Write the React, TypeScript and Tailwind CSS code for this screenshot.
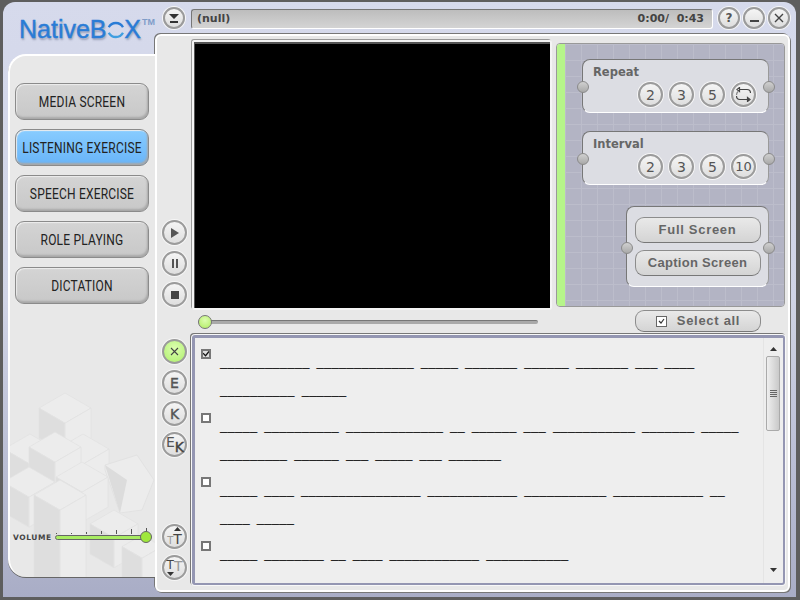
import React from "react";

const menu = ["MEDIA SCREEN", "LISTENING EXERCISE", "SPEECH EXERCISE", "ROLE PLAYING", "DICTATION"];

// word lengths of the blanked out captions
const captions = [
  [[12, 13, 5, 7, 6, 7, 3, 4], [10, 6]],
  [[5, 10, 13, 2, 6, 3, 11, 7, 5], [9, 6, 3, 5, 3, 7]],
  [[5, 4, 16, 12, 11, 12, 2], [4, 5]],
  [[5, 8, 2, 4, 12, 11]],
];

function Round({ children, green, small }: { children?: React.ReactNode; green?: boolean; small?: boolean }) {
  return (
    <div
      className={
        "flex shrink-0 items-center justify-center rounded-full border-2 border-[#9b9b9b] font-['DejaVu_Sans',sans-serif] text-[14px] leading-none text-[#555] shadow-[0_0_0_1px_#f6f6f6] " +
        (small ? "h-[22px] w-[22px] " : "h-[25px] w-[25px] ") +
        (green
          ? "bg-[radial-gradient(circle_at_50%_35%,#dcfdb0,#aef06c)]"
          : "bg-gradient-to-b from-[#f5f5f5] to-[#dedede]")
      }
    >
      {children}
    </div>
  );
}

function Pip({ side }: { side: "left" | "right" }) {
  return (
    <div
      className={
        "absolute top-1/2 mt-[1px] h-[12px] w-[12px] -translate-y-1/2 rounded-full border border-[#8a8a8a] bg-gradient-to-b from-[#d0d0d0] to-[#a9a9a9] " +
        (side === "left" ? "left-[-6px]" : "right-[-7px]")
      }
    />
  );
}

function Card({ label, children }: { label: string; children: React.ReactNode }) {
  return (
    <div className="relative h-[54px] w-[187px] rounded-[8px] border border-[#777] border-b-white border-r-[#9a9a9a] bg-[#dcdde3] pl-[10px] pr-[12px] pt-[4px]">
      <div className="text-[11.500px] font-bold leading-[16px] text-[#666]">{label}</div>
      <div className="mt-[2px] flex justify-end gap-[6px]">{children}</div>
      <Pip side="left" />
      <Pip side="right" />
    </div>
  );
}

function Pill({ children, className }: { children: React.ReactNode; className?: string }) {
  return (
    <div
      className={
        "flex w-[126px] shrink-0 items-center justify-center rounded-[9px] border border-[#8c8c8c] border-b-[#777] bg-gradient-to-b from-[#e9e9e9] to-[#d4d4d4] font-['Liberation_Sans',sans-serif] text-[13px] font-bold text-[#666] " +
        (className || "")
      }
    >
      {children}
    </div>
  );
}

function RepeatIcon() {
  return (
    <svg width="17" height="15" viewBox="0 0 17 15" fill="none" stroke="#444" strokeWidth="1.2">
      <path d="M4 2.500h8c2.500 0 3.500 1.500 3.500 3.500" />
      <path d="M1.500 8c0-1 .5-2.500 1.500-3.500" stroke="#888" />
      <path d="M4.500 .5 2 2.500l2.500 2z" fill="#fff" />
      <path d="M13 12.500H5C2.500 12.500 1.500 11 1.500 9" />
      <path d="M12.500 10.500l2.500 2-2.500 2z" fill="#444" />
    </svg>
  );
}

function Tri({ down, className }: { down?: boolean; className?: string }) {
  return (
    <svg width="7" height="4" viewBox="0 0 7 4" className={className}>
      <path d={down ? "M0 0h7L3.500 4z" : "M0 4h7L3.500 0z"} fill="#333" />
    </svg>
  );
}

function Cube({ x, y, s = 26, h = 30 }: { x: number; y: number; s?: number; h?: number }) {
  const t = s * 0.58;
  return (
    <g stroke="#e2e2e2" strokeWidth="0.8">
      <polygon points={`${x},${y} ${x + s},${y + t} ${x},${y + 2 * t} ${x - s},${y + t}`} fill="#ececec" />
      <polygon points={`${x - s},${y + t} ${x},${y + 2 * t} ${x},${y + 2 * t + h} ${x - s},${y + t + h}`} fill="#dedede" />
      <polygon points={`${x + s},${y + t} ${x},${y + 2 * t} ${x},${y + 2 * t + h} ${x + s},${y + t + h}`} fill="#ececec" />
    </g>
  );
}

function Cubes() {
  return (
    <svg className="absolute bottom-0 left-0" width="145" height="197" viewBox="8 380 145 197">
      <Cube x={63} y={393} />
      <Cube x={28} y={434} />
      <Cube x={81} y={434} />
      <polygon points="103,465 135,455 152,480 140,510 118,513 103,470" fill="#ececec" stroke="#e2e2e2" />
      <polygon points="103,465 118,513 125,480" fill="#dcdcdc" />
      <Cube x={53} y={432} />
      <Cube x={27} y={467} />
      <Cube x={80} y={462} />
      <Cube x={58} y={480} s={26} h={90} />
      <Cube x={112} y={510} s={24} h={30} />
      <Cube x={140} y={535} s={20} h={40} />
    </svg>
  );
}

export default function App() {
  return (
    <div className="h-[600px] w-[800px] overflow-hidden bg-[#5e5e5e] pl-[3px] pt-[2px] font-['DejaVu_Sans',sans-serif]">
      <div className="flex h-[595px] w-[793px] rounded-t-[12px] bg-gradient-to-b from-[#d6daec] via-[#d0d4e6] to-[#a9adc6]">
        {/* left column */}
        <div className="flex w-[152px] shrink-0 flex-col">
          <div className="flex h-[52px] items-start pl-[16px] pt-[12px] font-['Liberation_Sans',sans-serif] text-[25px] leading-[30px] text-[#2a7cd6] [-webkit-text-stroke:0.4px_#2a7cd6] [text-shadow:1px_2px_2px_#9aa0b8]">
            NativeB
            <svg width="20" height="20" viewBox="0 0 20 20" className="mt-[6px]" fill="none" strokeWidth="2.600">
              <path d="M2 7A9 9 0 0 1 18 7" stroke="#2a7cd6" />
              <path d="M2 13A9 9 0 0 0 18 13" stroke="#3f9ee0" />
            </svg>
            X
            <span className="ml-[1px] mt-[-7px] text-[9px] font-bold text-[#7f9cc8] [-webkit-text-stroke:0] [text-shadow:none]">TM</span>
          </div>
          <div className="relative ml-[5px] flex h-[523px] w-[147px] flex-col overflow-hidden rounded-l-[18px] border-l-2 border-t-2 border-white bg-[#e8e8e8] pl-[5px] pt-[27px] shadow-[0_1px_0_#666]">
            <Cubes />
            <div className="relative flex flex-col gap-[9px]">
              {menu.map((m, i) => (
                <div
                  key={m}
                  className={
                    "flex h-[37px] w-[134px] items-center justify-center rounded-[9px] border border-[#8b8b8b] font-['Roboto',sans-serif] text-[12px] tracking-[0.2px] text-[#222] shadow-[inset_-1px_-2px_2px_#a8a8a8,inset_1px_1px_1px_#eee] " +
                    (i === 1 ? "bg-gradient-to-b from-[#88ccff] to-[#68b4f8]" : "bg-gradient-to-b from-[#d4d4d4] to-[#c8c8c8]")
                  }
                >
                  <span className="scale-y-115">{m}</span>
                </div>
              ))}
            </div>
            <div className="relative mb-[34px] ml-[-2px] mt-auto flex items-center">
              <span className="w-[42px] text-[7.500px] font-bold tracking-[0.6px] text-[#444]">VOLUME</span>
              <div className="relative h-[5px] w-[92px] rounded-l-full border border-[#666] bg-[#a8ec62]">
                <div className="absolute bottom-[5px] left-0 flex w-[92px] items-end justify-between pr-[1px]">
                  <i className="h-[1px] w-[1px] bg-[#555]" />
                  <i className="h-[1px] w-[1px] bg-[#555]" />
                  <i className="h-[2px] w-[1px] bg-[#555]" />
                  <i className="h-[3px] w-[1px] bg-[#555]" />
                  <i className="h-[4px] w-[1px] bg-[#555]" />
                  <i className="h-[5px] w-[1px] bg-[#555]" />
                  <i className="h-[6px] w-[1px] bg-[#555]" />
                </div>
                <div className="absolute right-[-6px] top-[-5px] h-[12px] w-[12px] rounded-full border border-[#666] bg-[#9fe83c]" />
              </div>
            </div>
          </div>
        </div>

        {/* right column */}
        <div className="flex w-[635px] shrink-0 flex-col">
          <div className="flex h-[32px] items-start pl-[8px] pt-[5px]">
            <Round small>
              <svg width="10" height="9" viewBox="0 0 10 9">
                <path d="M0 0h10L5 5z M1 7h8v2H1z" fill="#333" />
              </svg>
            </Round>
            <div className="ml-[6px] mt-[2px] flex h-[20px] w-[522px] shrink-0 items-center justify-between rounded-[3px] border border-[#777] border-b-white border-r-white bg-gradient-to-b from-[#bdbdbd] to-[#d4d4d4] pl-[5px] pr-[8px] text-[11px] font-bold text-[#444]">
              <span>(null)</span>
              <span className="whitespace-pre">0:00/  0:43</span>
            </div>
            <div className="ml-[5px] flex gap-[3px]">
              <Round small><span className="text-[12px] font-bold">?</span></Round>
              <Round small><span className="mt-[6px] h-[2px] w-[9px] bg-[#444]" /></Round>
              <Round small>
                <svg width="10" height="10" viewBox="0 0 10 10" stroke="#444" strokeWidth="1.400"><path d="M1 1l8 8M9 1l-8 8" /></svg>
              </Round>
            </div>
          </div>

          <div className="flex h-[558px] w-[635px] rounded-[6px] border-2 border-white bg-[#e8e8e8] shadow-[-1px_-1px_0_#777,1px_1px_0_#777]">
            {/* side buttons */}
            <div className="flex w-[35px] shrink-0 flex-col pl-[5px] pt-[184px]">
              <div className="flex flex-col gap-[6px]">
                <Round>
                  <svg width="9" height="10" viewBox="0 0 9 10"><path d="M1 0l8 5-8 5z" fill="#555" /></svg>
                </Round>
                <Round><span className="flex gap-[2px]"><i className="h-[9px] w-[2px] bg-[#555]" /><i className="h-[9px] w-[2px] bg-[#555]" /></span></Round>
                <Round><span className="h-[8px] w-[8px] bg-[#444]" /></Round>
              </div>
              <div className="mt-[32px] flex flex-col gap-[6px]">
                <Round green>
                  <svg width="9" height="9" viewBox="0 0 9 9" stroke="#444" strokeWidth="1.100"><path d="M1 1l7 7M8 1l-7 7" /></svg>
                </Round>
                <Round><span className="[-webkit-text-stroke:0.4px_#555]">E</span></Round>
                <Round><span className="[-webkit-text-stroke:0.4px_#555]">K</span></Round>
                <Round>
                  <span className="flex h-[19px] w-[17px] justify-between text-[14px]">
                    <span className="self-start">E</span>
                    <span className="self-end text-[#444] [-webkit-text-stroke:0.4px_#444]">K</span>
                  </span>
                </Round>
              </div>
              <div className="mt-[67px] flex flex-col gap-[6px]">
                <Round>
                  <span className="flex items-end">
                    <span className="text-[10px] text-[#999]">T</span>
                    <span className="flex flex-col items-center text-[14px] text-[#444]">
                      <Tri className="mb-[1px]" />
                      T
                    </span>
                  </span>
                </Round>
                <Round>
                  <span className="flex items-start">
                    <span className="flex flex-col items-center text-[12px] text-[#444]">
                      T
                      <Tri down className="mt-[1px]" />
                    </span>
                    <span className="text-[14px] text-[#999]">T</span>
                  </span>
                </Round>
              </div>
            </div>

            {/* content */}
            <div className="flex w-[593px] shrink-0 flex-col pt-[4px]">
              <div className="flex h-[270px]">
                <div className="h-[270px] w-[360px] rounded-[3px] border-2 border-[#f4f4f4] shadow-[-1px_-1px_0_#999]">
                  <div className="h-full w-full border-l border-t-2 border-[#555] bg-black" />
                </div>
                <div className="ml-[4px] mt-[3px] flex h-[264px] w-[229px] overflow-hidden rounded-[4px] border border-[#999]">
                  <div className="w-[8px] shrink-0 bg-[#b6f58a]" />
                  <div className="flex-1 bg-[#b3b4c4] bg-[linear-gradient(#bcbdcb_1px,transparent_1px),linear-gradient(90deg,#bcbdcb_1px,transparent_1px)] bg-[length:16px_16px] pl-[17px] pt-[15px]">
                    <div className="flex flex-col gap-[18px]">
                      <Card label="Repeat">
                        <Round>2</Round>
                        <Round>3</Round>
                        <Round>5</Round>
                        <Round><RepeatIcon /></Round>
                      </Card>
                      <Card label="Interval">
                        <Round>2</Round>
                        <Round>3</Round>
                        <Round>5</Round>
                        <Round><span className="text-[13px]">10</span></Round>
                      </Card>
                    </div>
                    <div className="relative ml-[44px] mt-[21px] flex h-[81px] w-[143px] flex-col items-center justify-center gap-[7px] rounded-[8px] border border-[#777] border-b-white border-r-[#9a9a9a] bg-[#dcdde3]">
                      <Pill className="h-[26px] tracking-[0.7px]">Full Screen</Pill>
                      <Pill className="h-[26px] tracking-[0.3px]">Caption Screen</Pill>
                      <Pip side="left" />
                      <Pip side="right" />
                    </div>
                  </div>
                </div>
              </div>

              <div className="flex h-[25px] items-start">
                <div className="relative ml-[6px] mt-[10px] h-[4px] w-[340px] rounded-full border-t border-[#777] bg-[#a9a9a9]">
                  <div className="absolute left-0 top-[-6px] h-[14px] w-[14px] rounded-full border border-[#777] bg-[radial-gradient(circle_at_50%_35%,#dcfdb0,#b0ec60)]" />
                </div>
                <Pill className="ml-[97px] h-[22px] gap-[10px] tracking-[0.7px]">
                  <span className="flex h-[11px] w-[11px] items-center justify-center border border-[#666] bg-white">
                    <svg width="7" height="6" viewBox="0 0 7 6" fill="none" stroke="#333" strokeWidth="1.200"><path d="M1 3l2 2 3-4" /></svg>
                  </span>
                  Select all
                </Pill>
              </div>

              {/* caption list */}
              <div className="flex h-[250px] overflow-hidden rounded-[3px] border-2 border-l-[3px] border-t-[3px] border-[#9496b2] bg-[#eeeeee] shadow-[0_0_0_1px_#f8f8f8,-1px_-1px_0_1px_#777]">
                <div className="flex-1 overflow-hidden pl-[6px] pt-[11px]">
                  {captions.map((lines, i) => (
                    <div key={i} className="h-[64px]">
                      <div
                        className={
                          "flex h-[10px] w-[10px] items-center justify-center border-2 border-[#777] " +
                          (i === 0 ? "bg-[#ddd]" : "bg-white")
                        }
                      >
                        {i === 0 && (
                          <svg width="7" height="6" viewBox="0 0 7 6" fill="none" stroke="#111" strokeWidth="1.500"><path d="M0 2l3 3 4-5" /></svg>
                        )}
                      </div>
                      <div className="pl-[19px] font-['Liberation_Sans',sans-serif] text-[13px] leading-[28px] tracking-[0.25px] text-black [word-spacing:3px]">
                        {lines.map((words, j) => (
                          <div key={j} className={"h-[28px] whitespace-nowrap " + (j === 0 ? "mt-[-11px]" : "")}>
                            {words.map((n) => "_".repeat(n)).join(" ")}
                          </div>
                        ))}
                      </div>
                    </div>
                  ))}
                  <div className="h-[10px] w-[10px] border-2 border-[#777] bg-white" />
                </div>
                <div className="flex w-[20px] shrink-0 flex-col items-center border-l border-[#e4e4e4] pr-[1px] pt-[9px]">
                  <Tri />
                  <div className="mt-[5px] flex h-[75px] w-[14px] flex-col items-center justify-center gap-[1px] rounded-[2px] border border-[#aaa] bg-gradient-to-r from-[#efefef] to-[#c9c9c9]">
                    <i className="h-[1px] w-[7px] bg-[#666]" />
                    <i className="h-[1px] w-[7px] bg-[#666]" />
                    <i className="h-[1px] w-[7px] bg-[#666]" />
                    <i className="h-[1px] w-[7px] bg-[#666]" />
                  </div>
                  <Tri down className="mt-[137px]" />
                </div>
              </div>
            </div>
          </div>
        </div>
      </div>
    </div>
  );
}
